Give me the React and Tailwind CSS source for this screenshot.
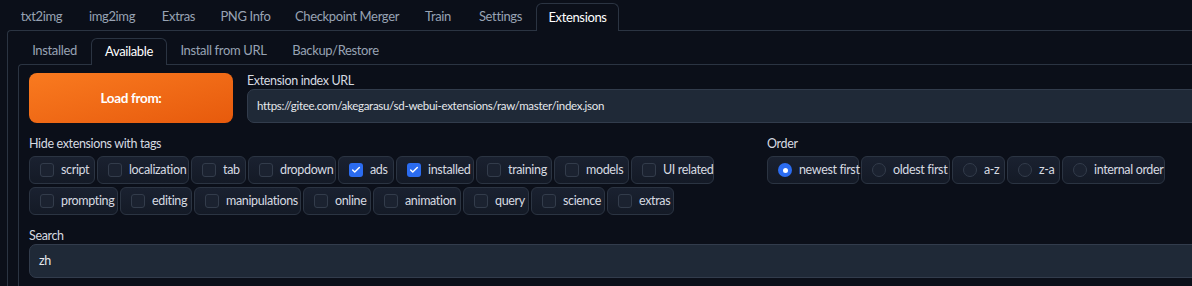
import { Check } from 'lucide-react';

const topTabs = [
  { label: 'txt2img', w: 'w-[67px]' },
  { label: 'img2img', w: 'w-[74px]' },
  { label: 'Extras', w: 'w-[59px]' },
  { label: 'PNG Info', w: 'w-[75px]' },
  { label: 'Checkpoint Merger', w: 'w-[128px]' },
  { label: 'Train', w: 'w-[54px]' },
  { label: 'Settings', w: 'w-[71px]' },
  { label: 'Extensions', w: 'w-[83px]', active: true },
];

const subTabs = [
  { label: 'Installed', w: 'w-[73px]' },
  { label: 'Available', w: 'w-[76px]', active: true },
  { label: 'Install from URL', w: 'w-[113px]' },
  { label: 'Backup/Restore', w: 'w-[111px]' },
];

const tagRows = [
  [
    { label: 'script', w: 'w-[66px]' },
    { label: 'localization', w: 'w-[92px]' },
    { label: 'tab', w: 'w-[55px]' },
    { label: 'dropdown', w: 'w-[88px]' },
    { label: 'ads', w: 'w-[56px]', checked: true },
    { label: 'installed', w: 'w-[78px]', checked: true },
    { label: 'training', w: 'w-[76px]' },
    { label: 'models', w: 'w-[75px]' },
    { label: 'UI related', w: 'w-[83px]' },
  ],
  [
    { label: 'prompting', w: 'w-[89px]' },
    { label: 'editing', w: 'w-[72px]' },
    { label: 'manipulations', w: 'w-[107px]' },
    { label: 'online', w: 'w-[68px]' },
    { label: 'animation', w: 'w-[88px]' },
    { label: 'query', w: 'w-[66px]' },
    { label: 'science', w: 'w-[74px]' },
    { label: 'extras', w: 'w-[67px]' },
  ],
];

const orders = [
  { label: 'newest first', w: 'w-[92px]', checked: true },
  { label: 'oldest first', w: 'w-[89px]' },
  { label: 'a-z', w: 'w-[53px]' },
  { label: 'z-a', w: 'w-[53px]' },
  { label: 'internal order', w: 'w-[103px]' },
];

function Chip({ label, w, checked, radio }) {
  return (
    <label
      className={`${w} h-[28px] flex items-center gap-[7px] pl-[10px] rounded-[6px] border border-[#2b3442] bg-gradient-to-b from-[#1a2130] to-[#141a26] text-[#d6dae1] whitespace-nowrap`}
    >
      {radio ? (
        <span
          className={`w-[14px] h-[14px] rounded-full flex items-center justify-center shrink-0 ${
            checked ? 'bg-[#2b6cf0]' : 'bg-[#1b2230] border border-[#333c4b]'
          }`}
        >
          {checked && <span className="w-[5px] h-[5px] rounded-full bg-white" />}
        </span>
      ) : (
        <span
          className={`w-[14px] h-[14px] rounded-[3px] flex items-center justify-center shrink-0 ${
            checked ? 'bg-[#2b6cf0]' : 'bg-[#1b2230] border border-[#333c4b]'
          }`}
        >
          {checked && <Check size={10} strokeWidth={3.5} className="text-white" />}
        </span>
      )}
      <span>{label}</span>
    </label>
  );
}

export default function App() {
  return (
    <div
      className="w-[1192px] h-[286px] overflow-hidden bg-[#0b0f19] text-[12.5px] tracking-[-0.35px]"
      style={{ fontFamily: 'Lato, "Noto Sans", sans-serif' }}
    >
      <div className="w-[1260px] pt-[3px] pl-[7px]">
        {/* top tabs */}
        <div className="flex pl-[1px] relative z-10">
          {topTabs.map((t) => (
            <div
              key={t.label}
              className={`${t.w} h-[27px] flex items-center justify-center text-[13px] ${
                t.active
                  ? 'border border-b-0 border-[#2b3442] rounded-t-[6px] bg-[#0b0f19] text-white mb-[-1px] h-[28px]'
                  : 'text-[#98a3b4]'
              }`}
            >
              {t.label}
            </div>
          ))}
        </div>

        {/* outer panel */}
        <div className="border-l border-t border-[#2b3442] rounded-tl-[4px] pl-[10px] pt-[7px]">
          {/* sub tabs */}
          <div className="flex relative z-10">
            {subTabs.map((t) => (
              <div
                key={t.label}
                className={`${t.w} h-[26px] flex items-center justify-center text-[13px] ${
                  t.active
                    ? 'border border-b-0 border-[#2b3442] rounded-t-[6px] bg-[#0b0f19] text-white mb-[-1px] h-[27px]'
                    : 'text-[#98a3b4]'
                }`}
              >
                {t.label}
              </div>
            ))}
          </div>

          {/* inner panel */}
          <div className="border-l border-t border-[#2b3442] rounded-tl-[4px] pl-[10px] pt-[8px] h-[240px]">
            <div className="flex gap-[14px]">
              <button className="w-[204px] h-[50px] rounded-[8px] bg-gradient-to-br from-[#f97a1f] to-[#e75a0c] text-white font-bold text-[13.5px]">
                Load from:
              </button>
              <div className="flex-1 flex flex-col">
                <div className="h-[16px] text-[#d6dae1] leading-[16px]">Extension index URL</div>
                <div className="h-[34px] rounded-[7px] border border-[#323c4c] bg-[#1f2937] flex items-center pl-[9px] text-[11.5px] tracking-[-0.3px] text-[#e5e8ec]">
                  https://gitee.com/akegarasu/sd-webui-extensions/raw/master/index.json
                </div>
              </div>
            </div>

            <div className="flex mt-[13px]">
              <div className="w-[738px] flex flex-col">
                <div className="h-[16px] leading-[16px] text-[#d6dae1]">Hide extensions with tags</div>
                <div className="mt-[4px] flex flex-col gap-[3px]">
                  {tagRows.map((row, i) => (
                    <div key={i} className="flex gap-[2px]">
                      {row.map((c) => (
                        <Chip key={c.label} {...c} />
                      ))}
                    </div>
                  ))}
                </div>
              </div>
              <div className="flex flex-col">
                <div className="h-[16px] leading-[16px] text-[#d6dae1]">Order</div>
                <div className="mt-[4px] flex gap-[2px]">
                  {orders.map((o) => (
                    <Chip key={o.label} {...o} radio />
                  ))}
                </div>
              </div>
            </div>

            <div className="mt-[13px] h-[16px] leading-[16px] text-[#d6dae1]">Search</div>
            <div className="h-[34px] rounded-[7px] border border-[#323c4c] bg-[#1f2937] flex items-center pl-[9px] text-[#e5e8ec]">
              zh
            </div>
          </div>
        </div>
      </div>
    </div>
  );
}
